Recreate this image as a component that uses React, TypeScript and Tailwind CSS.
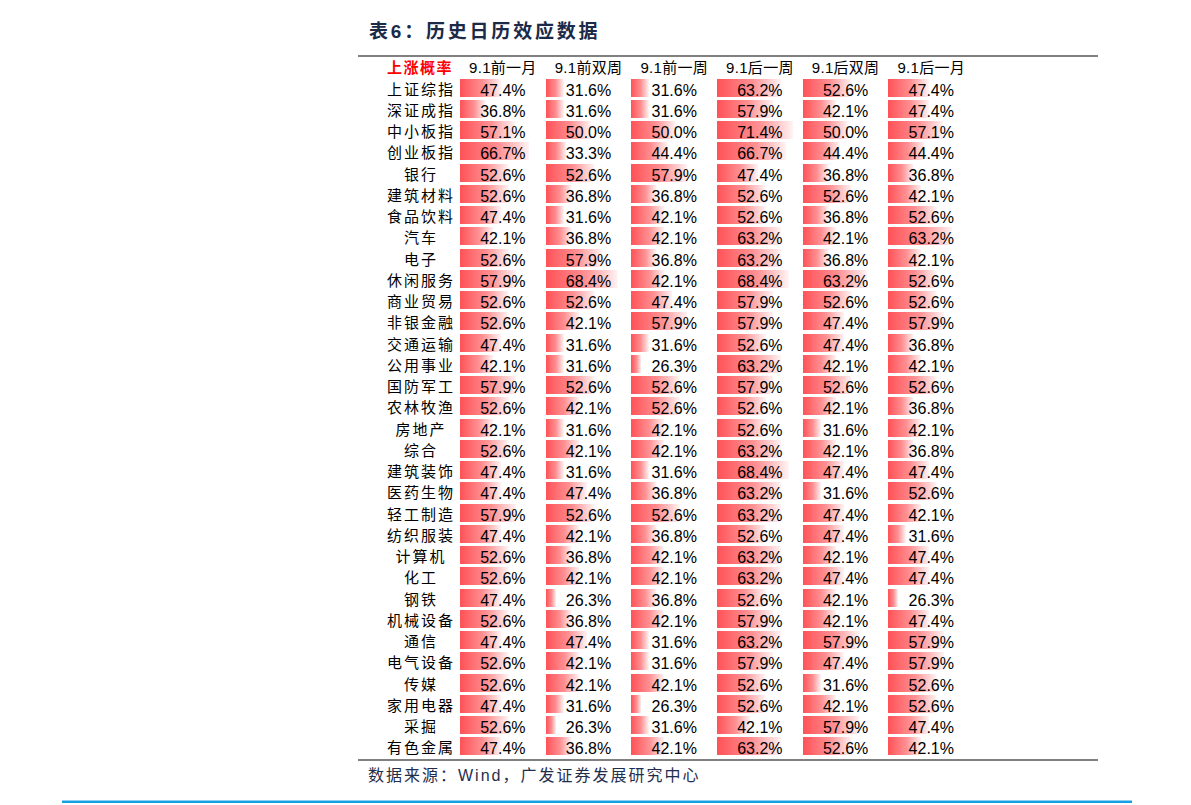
const heads = ["9.1前一月", "9.1前双周", "9.1前一周", "9.1后一周", "9.1后双周", "9.1后一月"];

const rows: [string, string[]][] = [
  ["上证综指", ["47.4", "31.6", "31.6", "63.2", "52.6", "47.4"]],
  ["深证成指", ["36.8", "31.6", "31.6", "57.9", "42.1", "47.4"]],
  ["中小板指", ["57.1", "50.0", "50.0", "71.4", "50.0", "57.1"]],
  ["创业板指", ["66.7", "33.3", "44.4", "66.7", "44.4", "44.4"]],
  ["银行", ["52.6", "52.6", "57.9", "47.4", "36.8", "36.8"]],
  ["建筑材料", ["52.6", "36.8", "36.8", "52.6", "52.6", "42.1"]],
  ["食品饮料", ["47.4", "31.6", "42.1", "52.6", "36.8", "52.6"]],
  ["汽车", ["42.1", "36.8", "42.1", "63.2", "42.1", "63.2"]],
  ["电子", ["52.6", "57.9", "36.8", "63.2", "36.8", "42.1"]],
  ["休闲服务", ["57.9", "68.4", "42.1", "68.4", "63.2", "52.6"]],
  ["商业贸易", ["52.6", "52.6", "47.4", "57.9", "52.6", "52.6"]],
  ["非银金融", ["52.6", "42.1", "57.9", "57.9", "47.4", "57.9"]],
  ["交通运输", ["47.4", "31.6", "31.6", "52.6", "47.4", "36.8"]],
  ["公用事业", ["42.1", "31.6", "26.3", "63.2", "42.1", "42.1"]],
  ["国防军工", ["57.9", "52.6", "52.6", "57.9", "52.6", "52.6"]],
  ["农林牧渔", ["52.6", "42.1", "52.6", "52.6", "42.1", "36.8"]],
  ["房地产", ["42.1", "31.6", "42.1", "52.6", "31.6", "42.1"]],
  ["综合", ["52.6", "42.1", "42.1", "63.2", "42.1", "36.8"]],
  ["建筑装饰", ["47.4", "31.6", "31.6", "68.4", "47.4", "47.4"]],
  ["医药生物", ["47.4", "47.4", "36.8", "63.2", "31.6", "52.6"]],
  ["轻工制造", ["57.9", "52.6", "52.6", "63.2", "47.4", "42.1"]],
  ["纺织服装", ["47.4", "42.1", "36.8", "52.6", "47.4", "31.6"]],
  ["计算机", ["52.6", "36.8", "42.1", "63.2", "42.1", "47.4"]],
  ["化工", ["52.6", "42.1", "42.1", "63.2", "47.4", "47.4"]],
  ["钢铁", ["47.4", "26.3", "36.8", "52.6", "42.1", "26.3"]],
  ["机械设备", ["52.6", "36.8", "42.1", "57.9", "42.1", "47.4"]],
  ["通信", ["47.4", "47.4", "31.6", "63.2", "57.9", "57.9"]],
  ["电气设备", ["52.6", "42.1", "31.6", "57.9", "47.4", "57.9"]],
  ["传媒", ["52.6", "42.1", "42.1", "52.6", "31.6", "52.6"]],
  ["家用电器", ["47.4", "31.6", "26.3", "52.6", "42.1", "52.6"]],
  ["采掘", ["52.6", "26.3", "31.6", "42.1", "57.9", "47.4"]],
  ["有色金属", ["47.4", "36.8", "42.1", "63.2", "52.6", "42.1"]],
];

// excel-style data bar: length grows with the value
function barStyle(v: string) {
  const w = Math.max(0, 1.46 * (parseFloat(v) - 19.3));
  return {
    backgroundImage: "linear-gradient(to right, #ff5257, #ff8f92 55%, #fff4f4)",
    backgroundSize: `${w}px 18px`,
    backgroundRepeat: "no-repeat",
    backgroundPosition: "0 0",
  };
}

const font = { fontFamily: '"Liberation Sans", "Noto Sans CJK SC", sans-serif' };

export default function App() {
  return (
    <div className="w-[1191px] h-[805px] bg-white overflow-hidden" style={font}>
      <div className="ml-[358px] w-[740px]">
        {/* Title */}
        <div className="h-[55px] pt-[20px] pl-[11px]">
          <h1 className="text-[19px] leading-[24px] font-bold tracking-[2.8px] text-[#1b2a47]">
            表6：历史日历效应数据
          </h1>
        </div>

        {/* Table */}
        <div className="border-t-2 border-b-2 border-[#808080] pl-[22px] text-[15px] text-black">
          <div className="grid grid-cols-[80px_repeat(6,85.7px)] h-[21.5px] items-center leading-[21px]">
            <div className="text-center font-bold text-[#ff0000] tracking-[1.5px]">上涨概率</div>
            {heads.map((h) => (
              <div key={h} className="text-center tracking-[0.3px]">
                {h}
              </div>
            ))}
          </div>
          {rows.map(([name, vals]) => (
            <div key={name} className="grid grid-cols-[80px_repeat(6,85.7px)] h-[21.26px] leading-[21px]">
              <div className="text-center tracking-[2px] pl-[2px]">{name}</div>
              {vals.map((v, i) => (
                <div key={i} className="text-center text-[16px] pt-[1px]" style={barStyle(v)}>
                  {v}%
                </div>
              ))}
            </div>
          ))}
        </div>

        {/* Source */}
        <p className="mt-[5px] pl-[10px] text-[16px] leading-[20px] tracking-[2px] text-[#1f2e4d]">
          数据来源：Wind，广发证券发展研究中心
        </p>
      </div>

      <div className="mt-[14px] ml-[62px] w-[1070px] h-[3px] bg-[#15a0e4] border-t border-[#8fd0f2]" />
    </div>
  );
}
